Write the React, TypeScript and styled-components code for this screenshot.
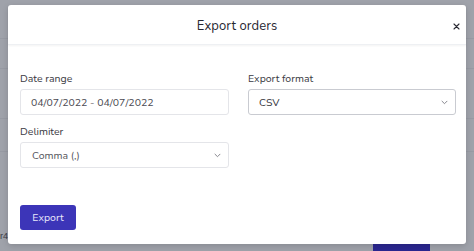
import React from "react";
import styled, { createGlobalStyle } from "styled-components";

const Global = createGlobalStyle`
  html, body { margin: 0; padding: 0; }
  body {
    width: 474px; height: 251px; overflow: hidden;
    background: #9fa2aa;
    font-family: "Nunito", Lato, "Noto Sans", sans-serif;
  }
`;

const Backdrop = styled.div`
  position: relative;
  width: 474px;
  height: 251px;
  overflow: hidden;
  background: #9fa2aa;
  padding-top: 5px;
  box-sizing: border-box;
`;

const BgLine = styled.div<{ $top: number }>`
  position: absolute;
  left: 0;
  right: 0;
  top: ${(p) => p.$top}px;
  height: 1px;
  background: #979aa3;
`;

const BgButton = styled.div`
  position: absolute;
  left: 373px;
  top: 236px;
  width: 57px;
  height: 22px;
  border-radius: 4px;
  background: #2b2790;
`;

const BgText = styled.div`
  position: absolute;
  left: 0;
  top: 231px;
  font-size: 9px;
  color: #3a3a44;
  font-family: "Liberation Sans", sans-serif;
`;

const Modal = styled.div`
  position: relative;
  margin-left: 8px;
  width: 458px;
  height: 239px;
  background: #ffffff;
  border-radius: 3px;
  display: flex;
  flex-direction: column;
  box-shadow: 0 2px 6px rgba(0, 0, 0, 0.15);
`;

const Header = styled.div`
  height: 40px;
  box-sizing: border-box;
  padding-top: 3px;
  display: flex;
  align-items: center;
  justify-content: center;
  position: relative;
  box-shadow: 0 1px 2px rgba(0, 0, 0, 0.05);
  border-bottom: 1px solid #eef0f3;
`;

const Title = styled.h2`
  margin: 0;
  font-size: 13px;
  font-weight: 400;
  color: #26262f;
  letter-spacing: 0.1px;
`;

const Close = styled.button`
  position: absolute;
  right: 2px;
  top: 13px;
  width: 16px;
  height: 16px;
  padding: 0;
  border: none;
  background: none;
  display: flex;
  align-items: center;
  justify-content: center;
  cursor: pointer;
`;

const Body = styled.div`
  flex: 1;
  padding: 27px 10px 14px 12px;
  display: flex;
  flex-direction: column;
`;

const Grid = styled.div`
  display: grid;
  grid-template-columns: 209px 208px;
  column-gap: 19px;
  row-gap: 10px;
`;

const Field = styled.div`
  display: flex;
  flex-direction: column;
  gap: 3px;
`;

const Label = styled.label`
  font-size: 10.5px;
  color: #3a3a42;
  line-height: 14px;
`;

const Box = styled.div`
  height: 24px;
  border: 1px solid #e4e5e9;
  border-radius: 3px;
  display: flex;
  align-items: center;
  justify-content: space-between;
  padding: 0 7px 0 10px;
  font-size: 10.5px;
  color: #4a4a52;
  background: #fff;
`;

const SelectBox = styled(Box)<{ $strong?: boolean }>`
  border-color: ${(p) => (p.$strong ? "#c9cbd1" : "#e4e5e9")};
  padding-left: ${(p) => (p.$strong ? "10px" : "11px")};
  color: ${(p) => (p.$strong ? "#33333b" : "#55555d")};
`;

const Footer = styled.div`
  margin-top: auto;
  display: flex;
`;

const Button = styled.button`
  width: 56px;
  height: 25px;
  border: none;
  border-radius: 3px;
  background: #3c35b8;
  color: #e9e8fb;
  font-family: inherit;
  font-size: 10.5px;
  cursor: pointer;
`;

const Chevron = () => (
  <svg width="7" height="5" viewBox="0 0 7 5">
    <path d="M1 1.2 L3.5 3.7 L6 1.2" fill="none" stroke="#7a7a82" strokeWidth="0.9" strokeLinecap="round" strokeLinejoin="round" />
  </svg>
);

export default function App() {
  return (
    <>
      <Global />
      <Backdrop>
        <BgLine $top={38} />
        <BgLine $top={68} />
        <BgLine $top={118} />
        <BgLine $top={151} />
        <BgText>r4</BgText>
        <BgButton />
        <Modal>
          <Header>
            <Title>Export orders</Title>
            <Close aria-label="Close">
              <svg width="7" height="7" viewBox="0 0 7 7">
                <path d="M1 1 L6 6 M6 1 L1 6" stroke="#2a2a33" strokeWidth="1.1" strokeLinecap="round" />
              </svg>
            </Close>
          </Header>
          <Body>
            <Grid>
              <Field>
                <Label>Date range</Label>
                <Box>04/07/2022 - 04/07/2022</Box>
              </Field>
              <Field>
                <Label>Export format</Label>
                <SelectBox $strong>
                  CSV
                  <Chevron />
                </SelectBox>
              </Field>
              <Field>
                <Label>Delimiter</Label>
                <SelectBox>
                  Comma (,)
                  <Chevron />
                </SelectBox>
              </Field>
            </Grid>
            <Footer>
              <Button>Export</Button>
            </Footer>
          </Body>
        </Modal>
      </Backdrop>
    </>
  );
}
